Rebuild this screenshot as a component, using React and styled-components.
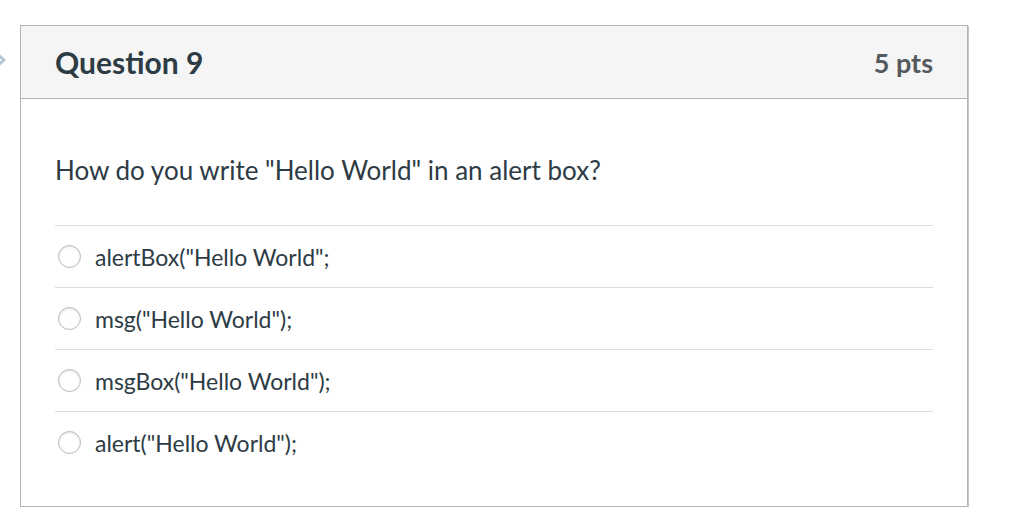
import React from 'react';
import styled, { createGlobalStyle } from 'styled-components';

const GlobalStyle = createGlobalStyle`
  html, body {
    margin: 0;
    padding: 0;
    background: #ffffff;
  }
  body {
    font-family: Lato, "Open Sans", "Liberation Sans", sans-serif;
    color: #2d3b45;
  }
`;

const answers = [
  'alertBox("Hello World";',
  'msg("Hello World");',
  'msgBox("Hello World");',
  'alert("Hello World");',
];

export default function App() {
  return (
    <>
      <GlobalStyle />
      <Page>
        <Gutter>
          {/* question nav arrow, mostly off screen */}
          <svg width="20" height="24" viewBox="0 0 20 24" overflow="visible">
            <path d="M-6 3 L4 12 L-6 21" fill="none" stroke="#b3c4d3" strokeWidth="3" strokeLinejoin="round" />
          </svg>
        </Gutter>
        <Card>
          <Header>
            <Title>Question 9</Title>
            <Points>5 pts</Points>
          </Header>
          <Body>
            <QuestionText>How do you write "Hello World" in an alert box?</QuestionText>
            <Answers>
              {answers.map((a) => (
                <Answer key={a}>
                  <Radio />
                  <AnswerLabel>{a}</AnswerLabel>
                </Answer>
              ))}
            </Answers>
          </Body>
        </Card>
      </Page>
    </>
  );
}

const Page = styled.div`
  display: flex;
  align-items: flex-start;
  padding: 25px 56px 0 0;
`;

const Gutter = styled.div`
  width: 20px;
  flex: 0 0 20px;
  padding-top: 23px;
  display: flex;
`;

const Card = styled.div`
  flex: 1;
  border: 1px solid #b4b4b4;
  box-shadow: 1px 1px 0 #c4c4c4;
  background: #ffffff;
`;

const Header = styled.div`
  display: flex;
  align-items: center;
  justify-content: space-between;
  height: 72px;
  padding: 0 34px;
  background: #f5f5f5;
  border-bottom: 1px solid #b4b4b4;
`;

const Title = styled.h2`
  margin: 0;
  font-size: 30px;
  font-weight: 700;
  color: #2d3b45;
`;

const Points = styled.div`
  font-size: 27px;
  font-weight: 700;
  color: #555a5e;
`;

const Body = styled.div`
  padding: 54px 34px 33px;
`;

const QuestionText = styled.p`
  margin: 0 0 38px;
  font-size: 26px;
  line-height: 34px;
  color: #2d3b45;
`;

const Answers = styled.div`
  display: flex;
  flex-direction: column;
`;

const Answer = styled.label`
  display: flex;
  align-items: center;
  height: 61px;
  border-top: 1px solid #dcdcdc;
`;

const Radio = styled.span`
  box-sizing: border-box;
  width: 23px;
  height: 23px;
  margin: 0 14px 0 3px;
  border-radius: 50%;
  border: 1px solid #b8b8b8;
  background: #ffffff;
  box-shadow: inset 0 1px 2px rgba(0, 0, 0, 0.12);
`;

const AnswerLabel = styled.span`
  font-size: 23px;
  color: #2d3b45;
`;
